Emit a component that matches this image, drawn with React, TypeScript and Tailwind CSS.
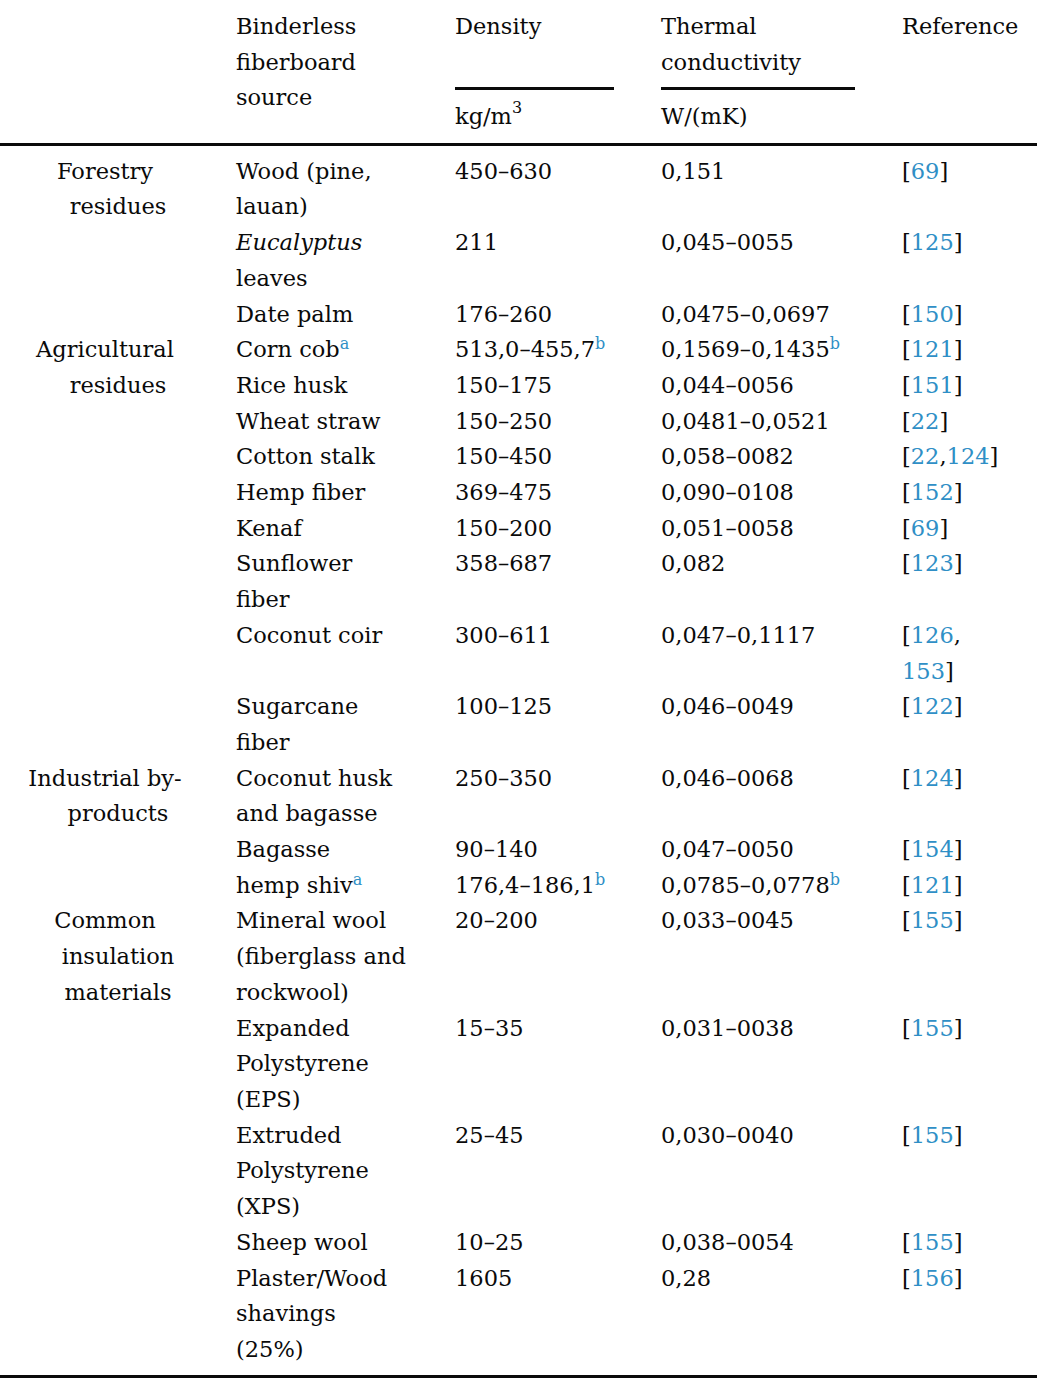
import React from "react";

const BLUE = "text-[#2f8fc6]";

function Ref({ ids, wrap }: { ids: string[]; wrap?: boolean }) {
  return (
    <span>
      [
      {ids.map((id, i) => (
        <React.Fragment key={id}>
          {i > 0 && ","}
          {i > 0 && wrap && <br />}
          <span className={BLUE}>{id}</span>
        </React.Fragment>
      ))}
      ]
    </span>
  );
}

function Sup({ c }: { c: string }) {
  return <sup className={`text-[16px] ${BLUE}`}>{c}</sup>;
}

type Row = {
  group?: React.ReactNode;
  groupSpan?: number;
  skipGroup?: boolean;
  src: React.ReactNode;
  den: React.ReactNode;
  th: React.ReactNode;
  ref: React.ReactNode;
};

const L = ({ children, pr }: { children: React.ReactNode; pr?: boolean }) => (
  <div className={pr ? "pr-[26px]" : ""}>{children}</div>
);

const rows: Row[] = [
  {
    group: (
      <>
        <L pr>Forestry</L>
        <L>residues</L>
      </>
    ),
    src: (
      <>
        Wood (pine,
        <br />
        lauan)
      </>
    ),
    den: "450–630",
    th: "0,151",
    ref: <Ref ids={["69"]} />,
  },
  {
    src: (
      <>
        <i>Eucalyptus</i>
        <br />
        leaves
      </>
    ),
    den: "211",
    th: "0,045–0055",
    ref: <Ref ids={["125"]} />,
  },
  { src: "Date palm", den: "176–260", th: "0,0475–0,0697", ref: <Ref ids={["150"]} /> },
  {
    group: (
      <>
        <L pr>Agricultural</L>
        <L>residues</L>
      </>
    ),
    groupSpan: 2,
    src: (
      <>
        Corn cob
        <Sup c="a" />
      </>
    ),
    den: (
      <>
        513,0–455,7
        <Sup c="b" />
      </>
    ),
    th: (
      <>
        0,1569–0,1435
        <Sup c="b" />
      </>
    ),
    ref: <Ref ids={["121"]} />,
  },
  { skipGroup: true, src: "Rice husk", den: "150–175", th: "0,044–0056", ref: <Ref ids={["151"]} /> },
  { src: "Wheat straw", den: "150–250", th: "0,0481–0,0521", ref: <Ref ids={["22"]} /> },
  { src: "Cotton stalk", den: "150–450", th: "0,058–0082", ref: <Ref ids={["22", "124"]} /> },
  { src: "Hemp fiber", den: "369–475", th: "0,090–0108", ref: <Ref ids={["152"]} /> },
  { src: "Kenaf", den: "150–200", th: "0,051–0058", ref: <Ref ids={["69"]} /> },
  {
    src: (
      <>
        Sunflower
        <br />
        fiber
      </>
    ),
    den: "358–687",
    th: "0,082",
    ref: <Ref ids={["123"]} />,
  },
  { src: "Coconut coir", den: "300–611", th: "0,047–0,1117", ref: <Ref ids={["126", "153"]} wrap /> },
  {
    src: (
      <>
        Sugarcane
        <br />
        fiber
      </>
    ),
    den: "100–125",
    th: "0,046–0049",
    ref: <Ref ids={["122"]} />,
  },
  {
    group: (
      <>
        <L pr>Industrial by-</L>
        <L>products</L>
      </>
    ),
    src: (
      <>
        Coconut husk
        <br />
        and bagasse
      </>
    ),
    den: "250–350",
    th: "0,046–0068",
    ref: <Ref ids={["124"]} />,
  },
  { src: "Bagasse", den: "90–140", th: "0,047–0050", ref: <Ref ids={["154"]} /> },
  {
    src: (
      <>
        hemp shiv
        <Sup c="a" />
      </>
    ),
    den: (
      <>
        176,4–186,1
        <Sup c="b" />
      </>
    ),
    th: (
      <>
        0,0785–0,0778
        <Sup c="b" />
      </>
    ),
    ref: <Ref ids={["121"]} />,
  },
  {
    group: (
      <>
        <L pr>Common</L>
        <L>insulation</L>
        <L>materials</L>
      </>
    ),
    src: (
      <>
        Mineral wool
        <br />
        (fiberglass and
        <br />
        rockwool)
      </>
    ),
    den: "20–200",
    th: "0,033–0045",
    ref: <Ref ids={["155"]} />,
  },
  {
    src: (
      <>
        Expanded
        <br />
        Polystyrene
        <br />
        (EPS)
      </>
    ),
    den: "15–35",
    th: "0,031–0038",
    ref: <Ref ids={["155"]} />,
  },
  {
    src: (
      <>
        Extruded
        <br />
        Polystyrene
        <br />
        (XPS)
      </>
    ),
    den: "25–45",
    th: "0,030–0040",
    ref: <Ref ids={["155"]} />,
  },
  { src: "Sheep wool", den: "10–25", th: "0,038–0054", ref: <Ref ids={["155"]} /> },
  {
    src: (
      <>
        Plaster/Wood
        <br />
        shavings
        <br />
        (25%)
      </>
    ),
    den: "1605",
    th: "0,28",
    ref: <Ref ids={["156"]} />,
  },
];

export default function App() {
  return (
    <div
      className="w-[1057px] h-[1391px] bg-white text-[#0a0a0a] text-[22.5px] leading-[35.7px] whitespace-nowrap"
      style={{ fontFamily: '"DejaVu Serif", serif' }}
    >
      <div className="w-[1037px] pt-[9px]">
        {/* Header */}
        <div className="grid grid-cols-[236px_219px_206px_241px_1fr]">
          <div />
          <div className="pr-[47px]">
            Binderless
            <br />
            fiberboard
            <br />
            source
          </div>
          <div className="pr-[47px] flex flex-col">
            <div className="h-[78px]">Density</div>
            <div className="h-[3px] bg-[#0a0a0a]" />
            <div className="mt-[9px]">
              kg/m<sup className="text-[16px] top-[-0.7em]">3</sup>
            </div>
          </div>
          <div className="pr-[47px] flex flex-col">
            <div className="h-[78px]">
              Thermal
              <br />
              conductivity
            </div>
            <div className="h-[3px] bg-[#0a0a0a]" />
            <div className="mt-[9px]">W/(mK)</div>
          </div>
          <div>Reference</div>
        </div>
        <div className="mt-[8px] h-[3px] bg-[#0a0a0a]" />
        {/* Body */}
        <div className="pt-[8px] grid grid-cols-[236px_219px_206px_241px_1fr]">
          {rows.map((r, i) => (
            <React.Fragment key={i}>
              {!r.skipGroup && (
                <div className={`text-center ${r.groupSpan === 2 ? "row-span-2" : ""}`}>
                  {r.group}
                </div>
              )}
              <div className={`pr-[47px] ${r.skipGroup ? "col-start-2" : ""}`}>{r.src}</div>
              <div className="pr-[47px]">{r.den}</div>
              <div className="pr-[47px]">{r.th}</div>
              <div>{r.ref}</div>
            </React.Fragment>
          ))}
        </div>
        <div className="mt-[7px] h-[3px] bg-[#0a0a0a]" />
      </div>
    </div>
  );
}
